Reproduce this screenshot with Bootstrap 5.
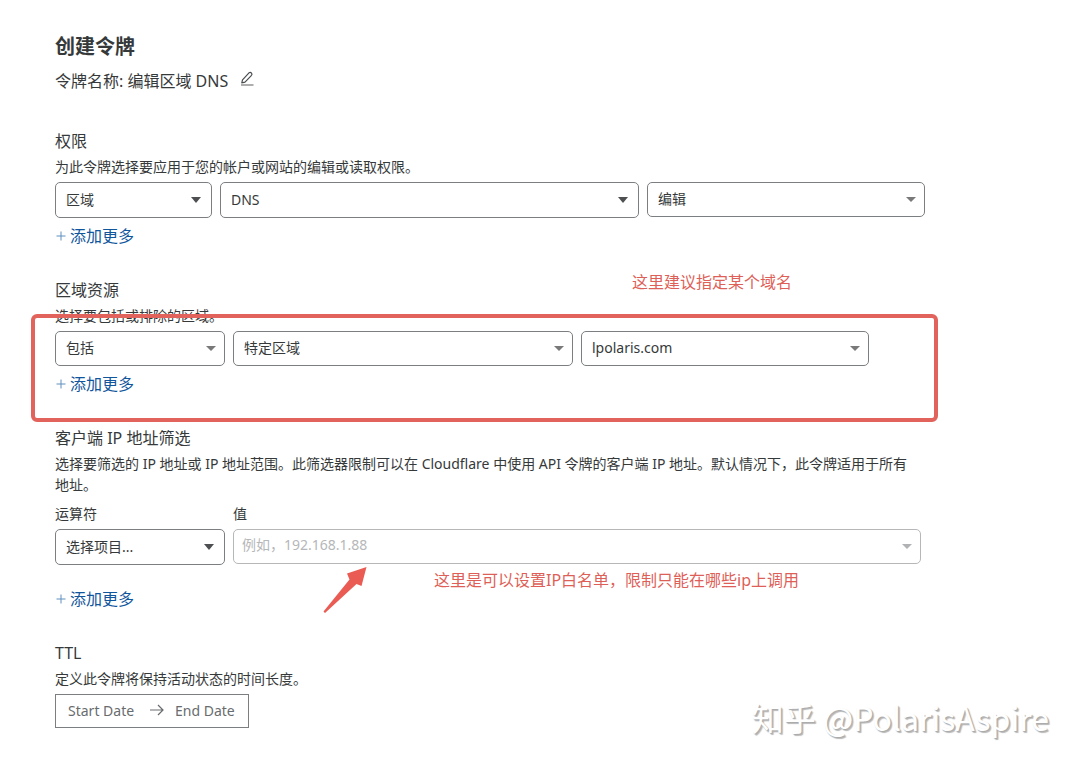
<!DOCTYPE html>
<html lang="zh-CN">
<head>
<meta charset="utf-8">
<meta name="viewport" content="width=device-width, initial-scale=1">
<title>创建令牌</title>
<link href="https://cdn.jsdelivr.net/npm/bootstrap@5.3.0/dist/css/bootstrap.min.css" rel="stylesheet">
<style>
  body { font: 14px/21px "Noto Sans", "Noto Sans CJK SC", sans-serif; color: #36393a; background: #fff; }
  .token-page { padding: 32px 152px 32px 55px; }
  .page-title { font-size: 20px; line-height: 30px; font-weight: 700; margin-bottom: 7px; }
  .token-name { font-size: 16px; line-height: 24px; margin-bottom: 36px; }
  .block { margin-bottom: 30px; }
  .block-title { font-size: 16px; line-height: 24px; font-weight: 400; margin-bottom: 3px; }
  .hint { margin-bottom: 5px; padding-right: 8px; }
  .fields { display: grid; gap: 5px 8px; align-items: start; }
  .fields-permission { grid-template-columns: 157fr 419fr 278fr; }
  .fields-zone { grid-template-columns: 170fr 340fr 288fr; padding-right: 56px; }
  .fields-ip { grid-template-columns: 170fr 688fr; padding-right: 4px; margin-top: 8px; }
  .picker {
    height: 35px; padding: 0 30px 2px 10px; font-size: 14px; line-height: 21px; color: #36393a;
    border: 1px solid #7c7f82; border-radius: 5px; background-color: #fff; background-size: 10px 5px;
    background-position: right 8px center;
    background-image: url("data:image/svg+xml,%3Csvg xmlns='http://www.w3.org/2000/svg' viewBox='0 0 10 5'%3E%3Cpath d='M0 0h10L5 5z' fill='%23797979'/%3E%3C/svg%3E");
  }
  .picker-native {
    height: 36px; background-size: 10px 6px; background-position: right 10px center;
    background-image: url("data:image/svg+xml,%3Csvg xmlns='http://www.w3.org/2000/svg' viewBox='0 0 10 6'%3E%3Cpath d='M0 0h10L5 6z' fill='%234d4f51'/%3E%3C/svg%3E");
  }
  .picker-muted, .picker-muted:disabled {
    border-color: #b5b7b9; padding: 0 30px 4px 8px; background-color: #fff; background-repeat: no-repeat;
    background-image: url("data:image/svg+xml,%3Csvg xmlns='http://www.w3.org/2000/svg' viewBox='0 0 10 5'%3E%3Cpath d='M0 0h10L5 5z' fill='%23b0b2b4'/%3E%3C/svg%3E");
  }
  .picker-muted::placeholder { color: #b5b7b9; opacity: 1; }
  .add-more { display: inline-flex; align-items: center; gap: 3px; margin-top: 6px; font-size: 16px; line-height: 24px; color: #10569c; text-decoration: none; vertical-align: top; }
  .add-late { margin-top: 22px; }
  .date-range { width: 194px; height: 34px; padding: 0 11px 2px 12px; border: 1px solid #7c7f82; }
  .date-range input { border: 0; padding: 0; width: 70px; height: 30px; background: none; color: #666; }
  .date-range input + svg + input { width: 62px; }
  .date-range input::placeholder { color: #696c6e; opacity: 1; }
  .note { color: #de5f58; font-size: 16px; line-height: 24px; white-space: nowrap; }
  .note-zone { left: 577px; top: -8px; }
  .note-ip { left: 379px; top: 142px; }
  .arrow-ip { left: 267px; top: 140px; }
  .red-frame { left: -24px; right: -13px; top: 36px; height: 108px; border: 4px solid #e1635c; border-radius: 6px; pointer-events: none; }
  .watermark { right: 28px; bottom: 28px; font: 400 32px/44px "Noto Sans CJK SC", sans-serif; color: #fff; text-shadow: 1px 1px 1px #aaa, 2px 2px 1px #bbb; }
</style>
</head>
<body>
<div class="position-relative min-vh-100">
  <main class="token-page">
    <h1 class="page-title">创建令牌</h1>
    <div class="token-name d-flex">
      <span>令牌名称: 编辑区域 DNS</span>
      <button type="button" class="btn p-0 border-0 d-flex ms-2 ps-1" aria-label="编辑名称">
        <svg width="16" height="20" viewBox="0 0 16 20" fill="none" stroke="#4a4d4f" stroke-width="1.2" stroke-linejoin="round"><path d="M2.500 10.800 9 3.800Q10.500 3 11.500 4.200 12.400 5.300 11.500 6.300L5 13.200 1.800 13.900z"/><path d="M1 16H13.500" stroke="#777"/></svg>
      </button>
    </div>

    <section class="block">
      <h2 class="block-title">权限</h2>
      <p class="hint">为此令牌选择要应用于您的帐户或网站的编辑或读取权限。</p>
      <div class="fields fields-permission">
        <select class="form-select picker picker-native" aria-label="权限范围"><option>区域</option></select>
        <select class="form-select picker picker-native" aria-label="权限项目"><option>DNS</option></select>
        <select class="form-select picker" aria-label="权限级别"><option>编辑</option></select>
      </div>
      <a href="#" class="add-more"><svg width="12" height="12" viewBox="0 0 12 12" stroke="#5f8fbe"><path d="M6 1.500v9M1.500 6h9"/></svg>添加更多</a>
    </section>

    <section class="block position-relative">
      <h2 class="block-title">区域资源</h2>
      <p class="hint">选择要包括或排除的区域。</p>
      <div class="fields fields-zone">
        <select class="form-select picker" aria-label="包括或排除"><option>包括</option></select>
        <select class="form-select picker" aria-label="区域类型"><option>特定区域</option></select>
        <select class="form-select picker" aria-label="区域"><option>lpolaris.com</option></select>
      </div>
      <a href="#" class="add-more"><svg width="12" height="12" viewBox="0 0 12 12" stroke="#5f8fbe"><path d="M6 1.500v9M1.500 6h9"/></svg>添加更多</a>
      <div class="note note-zone position-absolute">这里建议指定某个域名</div>
      <div class="red-frame position-absolute"></div>
    </section>

    <section class="block position-relative">
      <h2 class="block-title">客户端 IP 地址筛选</h2>
      <p class="hint">选择要筛选的 IP 地址或 IP 地址范围。此筛选器限制可以在 Cloudflare 中使用 API 令牌的客户端 IP 地址。默认情况下，此令牌适用于所有地址。</p>
      <div class="fields fields-ip">
        <label for="operator">运算符</label>
        <label for="ip-value">值</label>
        <select id="operator" class="form-select picker picker-native"><option>选择项目...</option></select>
        <input id="ip-value" type="text" class="form-control picker picker-muted" placeholder="例如，192.168.1.88" disabled>
      </div>
      <a href="#" class="add-more add-late"><svg width="12" height="12" viewBox="0 0 12 12" stroke="#5f8fbe"><path d="M6 1.500v9M1.500 6h9"/></svg>添加更多</a>
      <div class="note note-ip position-absolute">这里是可以设置IP白名单，限制只能在哪些ip上调用</div>
      <svg class="arrow-ip position-absolute" width="46" height="48" viewBox="0 0 46 48"><path d="M1.500 45.500 27.500 13.500 25 7.500 44.500 1 39.500 20 34.500 18 3 47z" fill="#ea5b53"/></svg>
    </section>

    <section>
      <h2 class="block-title">TTL</h2>
      <p class="hint">定义此令牌将保持活动状态的时间长度。</p>
      <div class="date-range d-flex align-items-center justify-content-between">
        <input type="text" placeholder="Start Date" aria-label="Start Date">
        <svg width="14" height="12" viewBox="0 0 14 12" fill="none" stroke="#696c6e" stroke-width="1.200"><path d="M0 6H13M8 1l5 5-5 5"/></svg>
        <input type="text" placeholder="End Date" aria-label="End Date">
      </div>
    </section>
  </main>
  <div class="watermark position-absolute">知乎 @PolarisAspire</div>
</div>
<script src="https://cdn.jsdelivr.net/npm/bootstrap@5.3.0/dist/js/bootstrap.bundle.min.js"></script>
</body>
</html>
